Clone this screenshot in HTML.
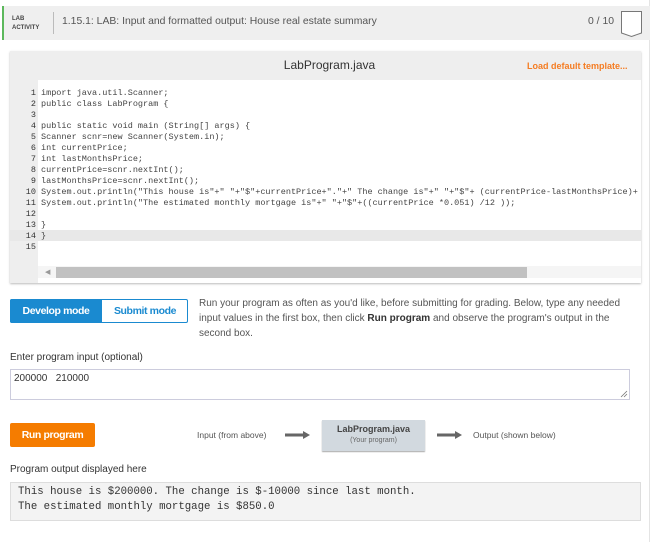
<!DOCTYPE html>
<html><head><style>
*{margin:0;padding:0;box-sizing:border-box}
body{width:663px;height:542px;background:#fff;font-family:"Liberation Sans",sans-serif;position:relative;overflow:hidden;color:#333}
.a{position:absolute}
.code{font-family:"Liberation Mono",monospace;font-size:8.5px;line-height:11px;white-space:pre;color:#444}
.ln{font-family:"Liberation Mono",monospace;font-size:8.5px;line-height:11px;text-align:right;color:#333}
</style></head><body>
<div class="a" style="left:2px;top:0;width:648px;height:542px;border-right:1px solid #e4e4e4"></div>
<div class="a" style="left:2px;top:6px;width:648px;height:34px;background:#efefef;border-left:2px solid #5cb85c"></div>
<div class="a" style="left:12px;top:15px;font-size:6px;line-height:9px;color:#444;font-weight:bold">LAB<br>ACTIVITY</div>
<div class="a" style="left:53px;top:12px;width:1px;height:22px;background:#bbb"></div>
<div class="a" style="left:62px;top:16px;font-size:10.4px;color:#555">1.15.1: LAB: Input and formatted output: House real estate summary</div>
<div class="a" style="left:588px;top:16px;font-size:10.4px;color:#555">0 / 10</div>
<svg class="a" style="left:620px;top:10px" width="24" height="28"><path d="M1.5 1.5H21.5V23L11.5 26.5L1.5 23Z" fill="#fff" stroke="#777" stroke-width="1"/></svg>
<div class="a" style="left:10px;top:51px;width:631px;height:232px;background:#fff;box-shadow:0 1px 2px #bbb"></div>
<div class="a" style="left:10px;top:51px;width:631px;height:29px;background:#eee"></div>
<div class="a" style="left:14px;top:58px;width:631px;text-align:center;font-size:12px;color:#333">LabProgram.java</div>
<div class="a" style="left:527px;top:61px;font-size:9px;font-weight:bold;color:#f57c22">Load default template...</div>
<div class="a" style="left:10px;top:80px;width:28px;height:203px;background:#eee"></div>
<div class="a" style="left:10px;top:230px;width:631px;height:11px;background:#e8e8e8"></div>
<div class="a ln" style="left:10px;top:88px;width:26px">1<br>2<br>3<br>4<br>5<br>6<br>7<br>8<br>9<br>10<br>11<br>12<br>13<br>14<br>15</div>
<div class="a code" style="left:41px;top:88px;width:600px;overflow:hidden">import java.util.Scanner;
public class LabProgram {

public static void main (String[] args) {
Scanner scnr=new Scanner(System.in);
int currentPrice;
int lastMonthsPrice;
currentPrice=scnr.nextInt();
lastMonthsPrice=scnr.nextInt();
System.out.println("This house is"+" "+"$"+currentPrice+"."+" The change is"+" "+"$"+ (currentPrice-lastMonthsPrice)+
System.out.println("The estimated monthly mortgage is"+" "+"$"+((currentPrice *0.051) /12 ));

}
}
</div>
<div class="a" style="left:38px;top:266px;width:603px;height:12px;background:#f5f5f5"></div>
<div class="a" style="left:56px;top:267px;width:471px;height:11px;background:#c1c1c1"></div>
<div class="a" style="left:45px;top:268px;font-size:7px;color:#999">◀</div>
<div class="a" style="left:10px;top:299px;width:178px;height:24px;border:1px solid #1a8ad0;border-radius:2px;background:#fff"></div>
<div class="a" style="left:10px;top:299px;width:92px;height:24px;background:#1a8ad0;color:#fff;font-size:10.5px;font-weight:bold;text-align:center;line-height:24px;letter-spacing:-0.4px;border-radius:2px 0 0 2px">Develop mode</div>
<div class="a" style="left:102px;top:299px;width:86px;height:24px;color:#1a8ad0;font-size:10.5px;font-weight:bold;text-align:center;line-height:24px;letter-spacing:-0.4px">Submit mode</div>
<div class="a" style="left:199px;top:296px;width:432px;font-size:10px;line-height:15px;color:#555">Run your program as often as you'd like, before submitting for grading. Below, type any needed input values in the first box, then click <b style="color:#333">Run program</b> and observe the program's output in the second box.</div>
<div class="a" style="left:10px;top:352px;font-size:10px;color:#333">Enter program input (optional)</div>
<div class="a" style="left:10px;top:369px;width:620px;height:31px;border:1px solid #ccd;background:#fff"></div>
<svg class="a" style="left:620px;top:390px" width="8" height="8"><path d="M7 1L1 7M7 4L4 7" stroke="#777" stroke-width="0.8"/></svg>
<div class="a" style="left:14px;top:373px;font-size:10px;color:#333;white-space:pre">200000   210000</div>
<div class="a" style="left:10px;top:423px;width:85px;height:24px;background:#f57c00;color:#fff;font-size:10.5px;font-weight:bold;text-align:center;line-height:24px;border-radius:2px;letter-spacing:-0.4px">Run program</div>
<div class="a" style="left:197px;top:430px;font-size:8.5px;color:#555">Input (from above)</div>
<svg class="a" style="left:285px;top:430px" width="26" height="10"><path d="M0 5H19" stroke="#666" stroke-width="3"/><path d="M18 1L25 5L18 9Z" fill="#666"/></svg>
<div class="a" style="left:322px;top:420px;width:103px;height:31px;background:#d2d9df;box-shadow:0 1px 1px #aaa"></div>
<div class="a" style="left:322px;top:424px;width:103px;text-align:center;font-size:9px;font-weight:bold;color:#444">LabProgram.java</div>
<div class="a" style="left:322px;top:437px;width:103px;text-align:center;font-size:7px;color:#666">(Your program)</div>
<svg class="a" style="left:437px;top:430px" width="26" height="10"><path d="M0 5H19" stroke="#666" stroke-width="3"/><path d="M18 1L25 5L18 9Z" fill="#666"/></svg>
<div class="a" style="left:473px;top:430px;font-size:8.5px;color:#555">Output (shown below)</div>
<div class="a" style="left:10px;top:464px;font-size:10px;color:#333">Program output displayed here</div>
<div class="a" style="left:10px;top:482px;width:631px;height:39px;background:#f3f3f3;border:1px solid #ddd"></div>
<div class="a" style="left:18px;top:485px;font-family:'Liberation Mono',monospace;font-size:10.7px;line-height:15px;color:#333;white-space:pre">This house is $200000. The change is $-10000 since last month.
The estimated monthly mortgage is $850.0</div>
</body></html>
